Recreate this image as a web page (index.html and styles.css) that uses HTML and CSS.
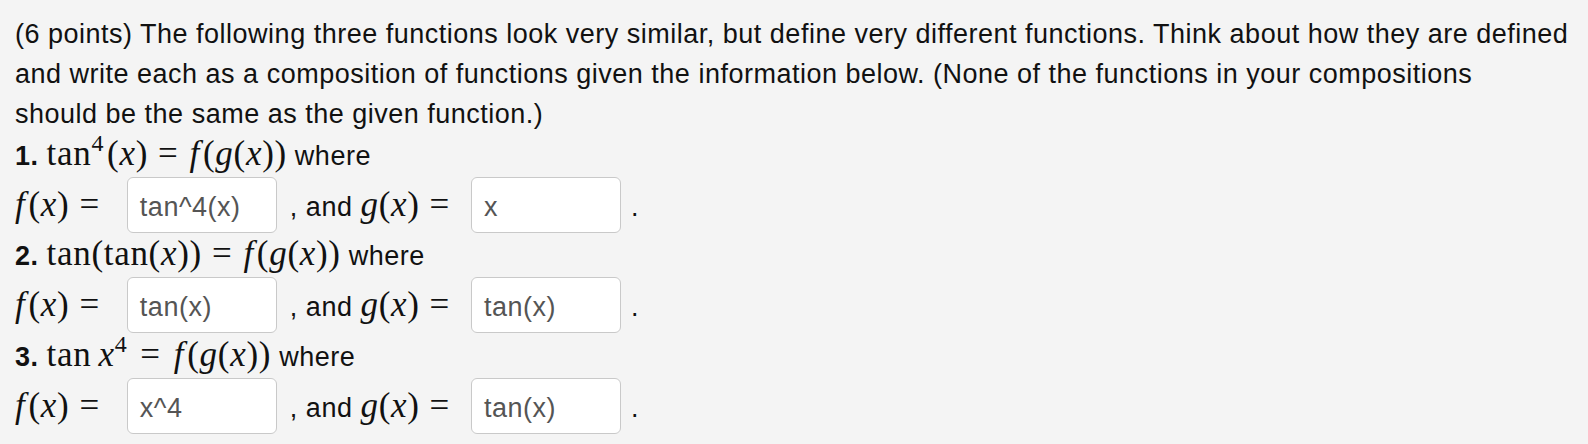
FILE: index.html
```html
<!DOCTYPE html>
<html>
<head>
<meta charset="utf-8">
<link rel="stylesheet" href="styles.css">
</head>
<body>
<div class="problem">
  <p class="intro">(6 points) The following three functions look very similar, but define very different functions. Think about how they are defined<br>and write each as a composition of functions given the information below. (None of the functions in your compositions<br>should be the same as the given function.)</p>

  <div class="part part-1">
    <div class="head"><b>1.</b> <span class="m">tan<sup>4</sup>(<i>x</i>)<span class="eq">=</span><i class="f">f</i>(<i>g</i>(<i>x</i>))</span> where</div>
    <div class="answers">
      <span class="m lhs"><i class="f">f</i>(<i>x</i>)<span class="eq">=</span></span>
      <span class="box">tan^4(x)</span>
      <span class="sep">, and <span class="m"><i>g</i>(<i>x</i>)<span class="eq">=</span></span></span>
      <span class="box">x</span>
      <span class="dot">.</span>
    </div>
  </div>

  <div class="part part-2">
    <div class="head"><b>2.</b> <span class="m">tan(tan(<i>x</i>))<span class="eq">=</span><i class="f">f</i>(<i>g</i>(<i>x</i>))</span> where</div>
    <div class="answers">
      <span class="m lhs"><i class="f">f</i>(<i>x</i>)<span class="eq">=</span></span>
      <span class="box">tan(x)</span>
      <span class="sep">, and <span class="m"><i>g</i>(<i>x</i>)<span class="eq">=</span></span></span>
      <span class="box">tan(x)</span>
      <span class="dot">.</span>
    </div>
  </div>

  <div class="part part-3">
    <div class="head"><b>3.</b> <span class="m">tan<span class="thin"></span><i>x</i><sup>4</sup><span class="eq eq-wide">=</span><i class="f">f</i>(<i>g</i>(<i>x</i>))</span> where</div>
    <div class="answers">
      <span class="m lhs"><i class="f">f</i>(<i>x</i>)<span class="eq">=</span></span>
      <span class="box">x^4</span>
      <span class="sep">, and <span class="m"><i>g</i>(<i>x</i>)<span class="eq">=</span></span></span>
      <span class="box">tan(x)</span>
      <span class="dot">.</span>
    </div>
  </div>
</div>
</body>
</html>
```
FILE: styles.css
```css
html, body {
  margin: 0;
  padding: 0;
  background: #f4f4f4;
}
body {
  font-family: "Liberation Sans", Arial, Helvetica, sans-serif;
  font-size: 27px;
  letter-spacing: 0.5px;
  line-height: 40px;
  color: #111;
}
.problem {
  padding: 14px 0 0 15px;
}
.intro {
  margin: 0;
  white-space: nowrap;
}
.head {
  height: 42px;
  line-height: 42px;
  white-space: nowrap;
}
.m {
  font-family: "Liberation Serif", "Times New Roman", serif;
  font-size: 35px;
  letter-spacing: 0.7px;
}
.head .m {
  line-height: 0;
}
.m i {
  font-style: italic;
}
.m .f {
  margin-right: 3px;
}
.m sup {
  font-size: 24px;
  line-height: 0;
  vertical-align: 14px;
  margin-right: 3px;
}
.thin {
  display: inline-block;
  width: 7px;
}
.eq {
  display: inline-block;
  margin: 0 11px 0 10px;
}
.eq-wide {
  margin: 0 13px 0 10px;
}
.answers {
  display: flex;
  align-items: baseline;
  height: 56px;
  white-space: nowrap;
}
.answers .m {
  line-height: 40px;
}
.lhs {
  margin-right: 16px;
}
.box {
  box-sizing: border-box;
  width: 150px;
  height: 56px;
  padding: 8.5px 12px 0;
  background: #fff;
  border: 1px solid #c9c9c9;
  border-radius: 6px;
  line-height: 40px;
  color: #555;
}
.sep {
  margin: 0 10px 0 13px;
}
.dot {
  margin-left: 10px;
}
.part-1 { margin-top: 1px; }
.part-2 { margin-top: 2px; }
.part-3 { margin-top: 3px; }
```
